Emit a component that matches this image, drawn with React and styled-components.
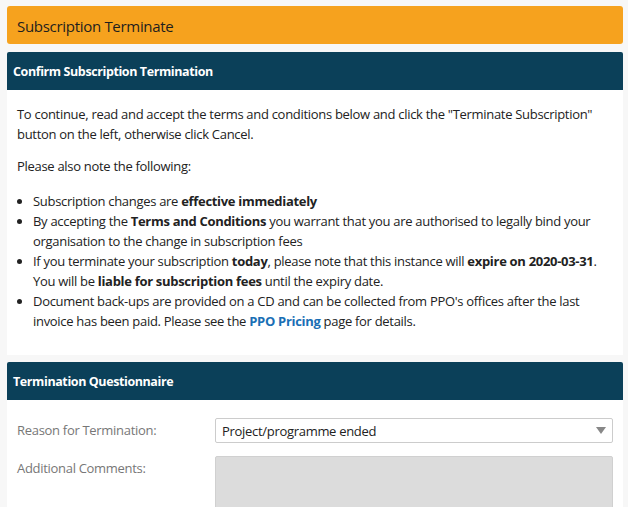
import React from "react";
import styled, { createGlobalStyle } from "styled-components";

const GlobalStyle = createGlobalStyle`
  html, body {
    margin: 0;
    padding: 0;
    background: #f7f7f7;
    font-family: "Open Sans", "Noto Sans", sans-serif;
    color: #222;
  }
`;

const Page = styled.div`
  padding: 6px 5px 0 7px;
  display: flex;
  flex-direction: column;
`;

const TitleBar = styled.div`
  height: 38px;
  background: #f6a21e;
  border-radius: 3px;
  display: flex;
  align-items: center;
  padding: 2px 0 0 10px;
  box-sizing: border-box;
  font-size: 15px;
  letter-spacing: -0.3px;
  color: #1e1e1e;
  margin-bottom: 8px;
`;

const Panel = styled.section`
  background: #fff;
  margin-bottom: 7px;
`;

const PanelHeader = styled.div`
  height: 38px;
  background: #0b4059;
  color: #fff;
  font-weight: 700;
  font-size: 12.5px;
  letter-spacing: -0.4px;
  display: flex;
  align-items: center;
  padding-left: 6px;
  border-radius: 2px 2px 0 0;
`;

const PanelBody = styled.div`
  padding: ${(p) => p.$pad || "14px 10px 24px 10px"};
  font-size: 13px;
  line-height: 20px;
  letter-spacing: -0.3px;
`;

const Para = styled.p`
  margin: 0 0 12px 0;
`;

const List = styled.ul`
  margin: 15px 0 0 0;
  padding-left: 16px;
  li {
    margin: 0;
  }
`;

const Link = styled.a`
  color: #1a6fb5;
  font-weight: 700;
  text-decoration: none;
`;

const FormRow = styled.div`
  display: grid;
  grid-template-columns: 198px 1fr;
  align-items: start;
  margin-bottom: 13px;
`;

const Label = styled.div`
  color: #777;
  font-size: 13px;
  line-height: 25px;
`;

const Select = styled.div`
  height: 25px;
  border: 1px solid #ccc;
  border-radius: 2px;
  box-sizing: border-box;
  display: flex;
  align-items: center;
  justify-content: space-between;
  padding: 0 6px 0 6px;
  color: #222;
  font-size: 13px;
  background: #fff;
`;

const Caret = styled.span`
  width: 0;
  height: 0;
  border-left: 5px solid transparent;
  border-right: 5px solid transparent;
  border-top: 7px solid #888;
`;

const TextArea = styled.div`
  height: 60px;
  background: #dcdcdc;
  border: 1px solid #d0d0d0;
  border-radius: 2px;
`;

export default function App() {
  return (
    <>
      <GlobalStyle />
      <Page>
        <TitleBar>Subscription Terminate</TitleBar>
        <Panel>
          <PanelHeader>Confirm Subscription Termination</PanelHeader>
          <PanelBody>
            <Para>
              To continue, read and accept the terms and conditions below and
              click the "Terminate Subscription" button on the left, otherwise
              click Cancel.
            </Para>
            <Para>Please also note the following:</Para>
            <List>
              <li>
                Subscription changes are <b>effective immediately</b>
              </li>
              <li>
                By accepting the <b>Terms and Conditions</b> you warrant that
                you are authorised to legally bind your organisation to the
                change in subscription fees
              </li>
              <li>
                If you terminate your subscription <b>today</b>, please note
                that this instance will <b>expire on 2020-03-31</b>. You will
                be <b>liable for subscription fees</b> until the expiry date.
              </li>
              <li>
                Document back-ups are provided on a CD and can be collected
                from PPO's offices after the last invoice has been paid. Please
                see the <Link href="#">PPO Pricing</Link> page for details.
              </li>
            </List>
          </PanelBody>
        </Panel>
        <Panel>
          <PanelHeader>Termination Questionnaire</PanelHeader>
          <PanelBody $pad="18px 10px 10px 10px">
            <FormRow>
              <Label>Reason for Termination:</Label>
              <Select>
                <span>Project/programme ended</span>
                <Caret />
              </Select>
            </FormRow>
            <FormRow>
              <Label>Additional Comments:</Label>
              <TextArea />
            </FormRow>
          </PanelBody>
        </Panel>
      </Page>
    </>
  );
}
